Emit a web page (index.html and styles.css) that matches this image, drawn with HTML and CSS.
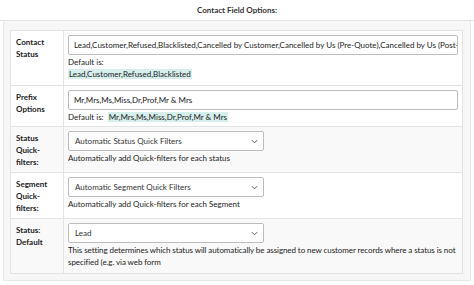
FILE: index.html
```html
<!DOCTYPE html>
<html>
<head>
<meta charset="utf-8">
<link rel="stylesheet" href="styles.css">
</head>
<body>
<div class="title">Contact Field Options:</div>
<div class="panel">
  <table class="opts">
    <colgroup><col class="c-label"><col></colgroup>
    <tr class="r1">
      <th>Contact Status</th>
      <td>
        <div class="input">Lead,Customer,Refused,Blacklisted,Cancelled by Customer,Cancelled by Us (Pre-Quote),Cancelled by Us (Post-Quote)</div>
        <div class="help">Default is:</div>
        <div class="help"><span class="hl">Lead,Customer,Refused,Blacklisted</span></div>
      </td>
    </tr>
    <tr class="r2">
      <th>Prefix Options</th>
      <td>
        <div class="input">Mr,Mrs,Ms,Miss,Dr,Prof,Mr &amp; Mrs</div>
        <div class="help">Default is: &nbsp;<span class="hl">Mr,Mrs,Ms,Miss,Dr,Prof,Mr &amp; Mrs</span></div>
      </td>
    </tr>
    <tr class="r3 alt">
      <th>Status Quick-filters:</th>
      <td>
        <div class="select"><span>Automatic Status Quick Filters</span><svg class="chev" viewBox="0 0 8 5" width="7" height="5"><path d="M1 1 L4 4 L7 1" fill="none" stroke="#555" stroke-width="1.1"/></svg></div>
        <div class="help">Automatically add Quick-filters for each status</div>
      </td>
    </tr>
    <tr class="r4">
      <th>Segment Quick-filters:</th>
      <td>
        <div class="select"><span>Automatic Segment Quick Filters</span><svg class="chev" viewBox="0 0 8 5" width="7" height="5"><path d="M1 1 L4 4 L7 1" fill="none" stroke="#555" stroke-width="1.1"/></svg></div>
        <div class="help">Automatically add Quick-filters for each Segment</div>
      </td>
    </tr>
    <tr class="r5 alt">
      <th>Status: Default</th>
      <td>
        <div class="select"><span>Lead</span><svg class="chev" viewBox="0 0 8 5" width="7" height="5"><path d="M1 1 L4 4 L7 1" fill="none" stroke="#555" stroke-width="1.1"/></svg></div>
        <div class="help long">This setting determines which status will automatically be assigned to new customer records where a status is not<br>specified (e.g. via web form</div>
      </td>
    </tr>
  </table>
</div>
</body>
</html>
```
FILE: styles.css
```css
html, body {
  margin: 0;
  padding: 0;
  background: #fff;
  font-family: Lato, "Liberation Sans", sans-serif;
  color: #222;
}
.title {
  height: 21px;
  line-height: 20px;
  text-align: center;
  font-weight: bold;
  font-size: 8px;
  color: #333;
  border-bottom: 1px solid #e2e2e2;
  box-sizing: border-box;
}
.panel {
  margin: 0 3px;
  padding: 9px 7px 16px 6px;
  background: #f7f7f7;
  border-left: 1px solid #e8e8e8;
  border-right: 1px solid #e8e8e8;
  border-bottom: 1px solid #e8e8e8;
  height: 260px;
  box-sizing: border-box;
}
.opts {
  width: 100%;
  table-layout: fixed;
  border-collapse: collapse;
  background: #fff;
  border: 1px solid #dcdcdc;
}
.c-label {
  width: 53px;
}
.opts th, .opts td {
  border: 1px solid #e3e3e3;
  vertical-align: top;
  text-align: left;
}
.opts th {
  padding: 5px 5px 4px 5px;
  font-size: 8px;
  line-height: 12px;
  font-weight: bold;
  color: #222;
}
.opts td {
  padding: 4px 4px 5px 4px;
  font-size: 8px;
  color: #222;
}
.r2 td {
  padding-bottom: 3px;
}
.alt th, .alt td {
  background: #f9f9f9;
}
.input {
  height: 20px;
  box-sizing: border-box;
  border: 1px solid #bdbdbd;
  border-radius: 2px;
  background: #fff;
  padding: 0 5px;
  line-height: 18px;
  font-size: 8px;
  white-space: nowrap;
  overflow: hidden;
  color: #222;
}
.select {
  width: 196px;
  height: 20px;
  box-sizing: border-box;
  border: 1px solid #bdbdbd;
  border-radius: 2px;
  background: #fff;
  padding: 0 5px 0 6px;
  display: flex;
  align-items: center;
  justify-content: space-between;
  font-size: 8px;
  color: #333;
}
.help {
  line-height: 12px;
  margin-top: 1px;
  white-space: nowrap;
}
.help.long {
  letter-spacing: -0.08px;
}
.help + .help {
  margin-top: 0;
}
.hl {
  background: #d6efec;
  padding: 0 1px;
}
```
